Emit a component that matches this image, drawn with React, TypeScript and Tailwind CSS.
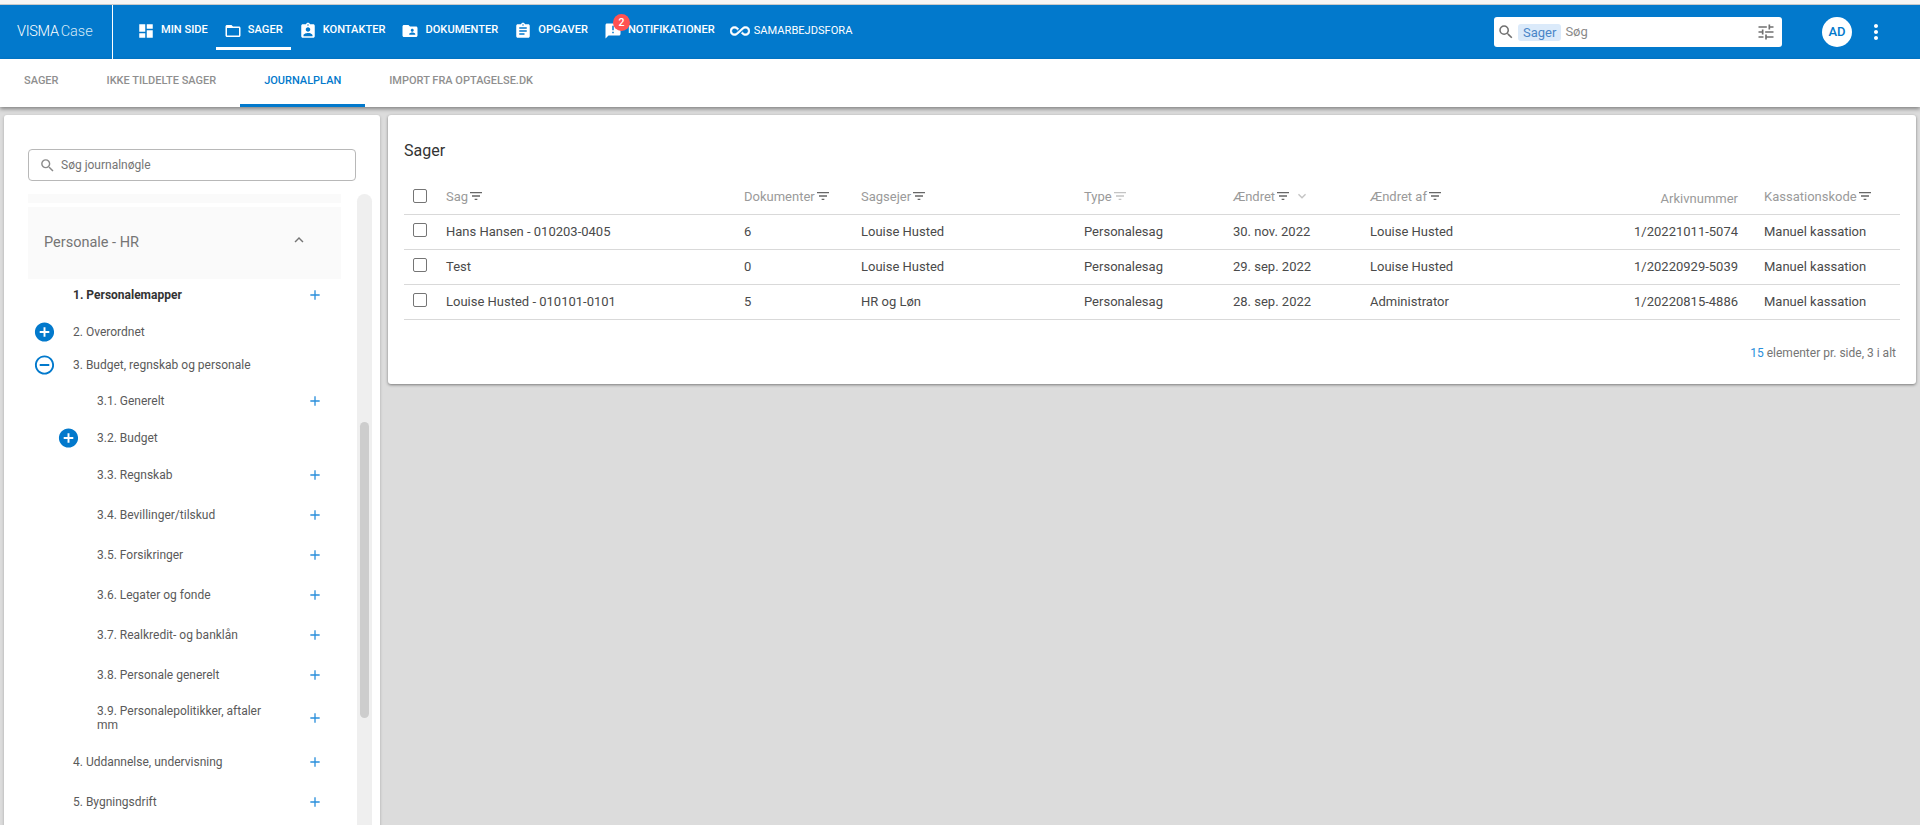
import {
  MdDashboard,
  MdFolderOpen,
  MdAssignmentInd,
  MdFolderShared,
  MdAssignment,
  MdAnnouncement,
  MdSearch,
  MdTune,
  MdMoreVert,
  MdFilterList,
  MdKeyboardArrowUp,
  MdKeyboardArrowDown,
  MdAdd,
  MdAddCircle,
  MdRemoveCircleOutline,
} from "react-icons/md"
import type { IconType } from "react-icons"

const navItems: { label: string; icon: IconType; active?: boolean; badge?: string }[] = [
  { label: "MIN SIDE", icon: MdDashboard },
  { label: "SAGER", icon: MdFolderOpen, active: true },
  { label: "KONTAKTER", icon: MdAssignmentInd },
  { label: "DOKUMENTER", icon: MdFolderShared },
  { label: "OPGAVER", icon: MdAssignment },
  { label: "NOTIFIKATIONER", icon: MdAnnouncement, badge: "2" },
]

const tabs = ["SAGER", "IKKE TILDELTE SAGER", "JOURNALPLAN", "IMPORT FRA OPTAGELSE.DK"]

type TreeRow = {
  label: string
  level: 0 | 1
  height: string
  marker: "plus" | "open" | "closed" | "add"
  bold?: boolean
}

const treeRows: TreeRow[] = [
  { label: "1. Personalemapper", level: 0, height: "h-[32px] mb-[4px]", marker: "add", bold: true },
  { label: "2. Overordnet", level: 0, height: "h-[33px]", marker: "plus" },
  { label: "3. Budget, regnskab og personale", level: 0, height: "h-[33px]", marker: "open" },
  { label: "3.1. Generelt", level: 1, height: "h-[40px]", marker: "add" },
  { label: "3.2. Budget", level: 1, height: "h-[34px]", marker: "plus" },
  { label: "3.3. Regnskab", level: 1, height: "h-[40px]", marker: "add" },
  { label: "3.4. Bevillinger/tilskud", level: 1, height: "h-[40px]", marker: "add" },
  { label: "3.5. Forsikringer", level: 1, height: "h-[40px]", marker: "add" },
  { label: "3.6. Legater og fonde", level: 1, height: "h-[40px]", marker: "add" },
  { label: "3.7. Realkredit- og banklån", level: 1, height: "h-[40px]", marker: "add" },
  { label: "3.8. Personale generelt", level: 1, height: "h-[40px]", marker: "add" },
  { label: "3.9. Personalepolitikker, aftaler mm", level: 1, height: "h-[46px] mb-[1px]", marker: "add" },
  { label: "4. Uddannelse, undervisning", level: 0, height: "h-[40px]", marker: "add" },
  { label: "5. Bygningsdrift", level: 0, height: "h-[40px]", marker: "add" },
]

const cases = [
  {
    name: "Hans Hansen - 010203-0405",
    docs: "6",
    owner: "Louise Husted",
    changed: "30. nov. 2022",
    changedBy: "Louise Husted",
    archive: "1/20221011-5074",
  },
  {
    name: "Test",
    docs: "0",
    owner: "Louise Husted",
    changed: "29. sep. 2022",
    changedBy: "Louise Husted",
    archive: "1/20220929-5039",
  },
  {
    name: "Louise Husted - 010101-0101",
    docs: "5",
    owner: "HR og Løn",
    changed: "28. sep. 2022",
    changedBy: "Administrator",
    archive: "1/20220815-4886",
  },
]

// all_inclusive, drawn by hand so it can take a stroke for the heavier look
function InfinityIcon() {
  return (
    <svg viewBox="0 0 24 24" width="20" height="20" fill="currentColor" stroke="currentColor" strokeWidth="0.7">
      <path d="M18.6 6.62c-1.44 0-2.8.56-3.77 1.53L12 10.66 10.48 12h.01L7.8 14.39c-.64.64-1.49.99-2.4.99-1.87 0-3.39-1.51-3.39-3.38S3.53 8.62 5.4 8.62c.91 0 1.76.35 2.44 1.03l1.13 1 1.51-1.34L9.22 8.2C8.2 7.18 6.84 6.62 5.4 6.62 2.42 6.62 0 9.04 0 12s2.42 5.38 5.4 5.38c1.44 0 2.8-.56 3.77-1.53l2.83-2.5.01.01L13.52 12h-.01l2.69-2.39c.64-.64 1.49-.99 2.4-.99 1.87 0 3.39 1.51 3.39 3.38s-1.52 3.38-3.39 3.38c-.9 0-1.76-.35-2.44-1.03l-1.14-1.01-1.51 1.34 1.27 1.12c1.02 1.01 2.37 1.57 3.82 1.57 2.98 0 5.4-2.41 5.4-5.38s-2.42-5.37-5.4-5.37z" />
    </svg>
  )
}

function Checkbox({ className = "" }: { className?: string }) {
  return <span className={`block h-[14px] w-[14px] rounded-[2px] border border-[#757575] bg-white ${className}`} />
}

function HeaderLabel({ label, faded }: { label: string; faded?: boolean }) {
  return (
    <span className="flex items-center">
      {label}
      <MdFilterList size={16} className={`-mt-[2px] ${faded ? "text-[#c4c4c4]" : "text-[#666666]"}`} />
    </span>
  )
}

function TreeItem({ row }: { row: TreeRow }) {
  return (
    <div className={`flex items-center ${row.height}`}>
      <div className={`relative flex min-w-0 flex-1 items-center ${row.level === 1 ? "pl-[69px]" : "pl-[45px]"}`}>
        {row.marker === "plus" && (
          <MdAddCircle
            size={23}
            className={`absolute top-1/2 -translate-y-1/2 text-[#0279cc] ${row.level === 1 ? "left-[29px]" : "left-[5px]"}`}
          />
        )}
        {row.marker === "open" && (
          <MdRemoveCircleOutline size={23} className="absolute top-1/2 left-[5px] -translate-y-1/2 text-[#0279cc]" />
        )}
        <span
          className={`text-[12px] leading-[14px] ${row.level === 1 ? "w-[175px]" : "w-[205px]"} ${
            row.bold ? "font-bold text-[#333333]" : "text-[#5a5a5a]"
          }`}
        >
          {row.label}
        </span>
      </div>
      {row.marker === "add" && <MdAdd size={16} className="mr-[18px] shrink-0 text-[#2a8fdb]" />}
    </div>
  )
}

export default function App() {
  return (
    <div className="flex h-[825px] w-[1920px] flex-col overflow-hidden bg-[#dcdcdc] font-['Roboto',sans-serif]">
      <div className="h-[5px] shrink-0 border-b border-[#c9c9c9] bg-[#f5f5f5]" />

      {/* top bar */}
      <header className="flex h-[54px] shrink-0 items-start bg-[#0279cc] text-white">
        <div className="flex h-full w-[113px] shrink-0 items-center border-r border-white pl-[17px] text-[14.5px] leading-none">
          <span className="font-light tracking-[-0.3px]">VISMA</span>
          <span className="ml-[2px] font-light text-[#d5e9f7]">Case</span>
        </div>
        <nav className="ml-[16px] flex text-[11.1px] font-medium">
          {navItems.map((item) => (
            <a
              key={item.label}
              className={`relative mt-[9px] flex h-[36px] items-center gap-[6px] border-b-[3px] px-[8px] ${
                item.active ? "border-white" : "border-transparent"
              }`}
            >
              <item.icon size={18} />
              {item.label}
              {item.badge && (
                <span className="absolute top-0 left-[17px] flex h-[17px] w-[17px] items-center justify-center rounded-full bg-[#ff5252] text-[10.5px] font-medium">
                  {item.badge}
                </span>
              )}
            </a>
          ))}
          <a className="mt-[9px] flex h-[36px] items-center gap-[4px] border-b-[3px] border-transparent pl-[7px]">
            <InfinityIcon />
            <span className="mt-[2px] font-normal">SAMARBEJDSFORA</span>
          </a>
        </nav>
        <div className="ml-auto mt-[12px] flex h-[30px] w-[288px] items-center rounded-[3px] bg-white pl-[3px] pr-[6px]">
          <MdSearch size={18} className="text-[#707070]" />
          <span className="ml-[3px] rounded-[3px] bg-[#dbeafa] px-[5px] py-[1px] text-[13px] leading-[15px] text-[#4a86c8]">
            Sager
          </span>
          <span className="ml-[4px] text-[13px] text-[#8a8a8a]">Søg</span>
          <MdTune size={20} className="ml-auto text-[#707070]" />
        </div>
        <div className="ml-[40px] mt-[12px] flex h-[30px] w-[30px] items-center justify-center rounded-full bg-white text-[13px] font-medium text-[#0279cc]">
          AD
        </div>
        <MdMoreVert size={24} className="ml-[12px] mr-[32px] mt-[15px]" />
      </header>

      {/* sub tabs */}
      <div className="z-10 flex h-[48px] shrink-0 bg-white shadow-[0_2px_4px_rgba(0,0,0,0.4)]">
        {tabs.map((tab) => (
          <a
            key={tab}
            className={`flex items-center border-b-[3px] px-[24px] text-[11px] font-medium ${
              tab === "JOURNALPLAN" ? "border-[#0279cc] text-[#0279cc]" : "border-transparent text-[#8f8f8f]"
            }`}
          >
            {tab}
          </a>
        ))}
      </div>

      <main className="flex min-h-0 flex-1 items-start gap-[8px] pt-[8px] pl-[4px] pr-[4px]">
        {/* left: journal plan */}
        <aside className="h-[720px] w-[376px] shrink-0 rounded-t-[3px] bg-white pt-[34px] shadow-[0_1px_3px_rgba(0,0,0,0.25)]">
          <div className="mx-[24px] flex h-[32px] w-[328px] items-center rounded-[4px] border border-[#b8b8b8] pl-[10px]">
            <MdSearch size={17} className="text-[#8a8a8a]" />
            <span className="ml-[5px] text-[12px] text-[#757575]">Søg journalnøgle</span>
          </div>
          <div className="mt-[13px] flex items-start pl-[24px]">
            <div className="w-[313px] shrink-0">
              <div className="h-[9px] bg-[#fafafa]" />
              <div className="mt-[4px] flex h-[72px] items-center justify-between bg-[#fafafa] pl-[16px] pr-[33px]">
                <span className="text-[14.5px] text-[#757575]">Personale - HR</span>
                <MdKeyboardArrowUp size={18} className="mb-[6px] text-[#757575]" />
              </div>
              {treeRows.map((row) => (
                <TreeItem key={row.label} row={row} />
              ))}
            </div>
            <div className="ml-[16px] h-[640px] w-[15px] shrink-0 rounded-t-[8px] bg-[#efefef] px-[3px] pt-[228px]">
              <div className="h-[296px] rounded-[5px] bg-[#cdcdcd]" />
            </div>
          </div>
        </aside>

        {/* right: cases */}
        <section className="h-[269px] w-[1528px] shrink-0 rounded-[3px] bg-white px-[16px] pt-[25px] shadow-[0_1px_3px_rgba(0,0,0,0.45)]">
          <h2 className="mb-[17px] text-[16px] leading-[22px] text-[#333333]">Sager</h2>
          <table className="w-[1496px] table-fixed border-collapse text-[13px] text-[#4a4a4a]">
            <colgroup>
              <col className="w-[42px]" />
              <col className="w-[298px]" />
              <col className="w-[117px]" />
              <col className="w-[223px]" />
              <col className="w-[149px]" />
              <col className="w-[137px]" />
              <col className="w-[230px]" />
              <col className="w-[164px]" />
              <col className="w-[136px]" />
            </colgroup>
            <thead>
              <tr className="h-[35px] border-b border-[#d9d9d9] text-left text-[#9a9a9a]">
                <th className="pl-[9px] font-normal">
                  <Checkbox />
                </th>
                <th className="pt-[1px] font-normal">
                  <HeaderLabel label="Sag" />
                </th>
                <th className="pt-[1px] font-normal">
                  <HeaderLabel label="Dokumenter" />
                </th>
                <th className="pt-[1px] font-normal">
                  <HeaderLabel label="Sagsejer" />
                </th>
                <th className="pt-[1px] font-normal">
                  <HeaderLabel label="Type" faded />
                </th>
                <th className="pt-[1px] font-normal">
                  <span className="flex items-center">
                    Ændret
                    <MdFilterList size={16} className="-mt-[2px] text-[#666666]" />
                    <MdKeyboardArrowDown size={16} className="ml-[3px] -mt-[2px] text-[#c4c4c4]" />
                  </span>
                </th>
                <th className="pt-[1px] font-normal">
                  <HeaderLabel label="Ændret af" />
                </th>
                <th className="pt-[5px] pr-[26px] text-right font-normal">Arkivnummer</th>
                <th className="pt-[1px] font-normal">
                  <HeaderLabel label="Kassationskode" />
                </th>
              </tr>
            </thead>
            <tbody>
              {cases.map((c) => (
                <tr key={c.name} className="h-[35px] border-b border-[#d9d9d9] [&>td]:pt-[1px]">
                  <td className="pl-[9px]">
                    <Checkbox className="mb-[4px]" />
                  </td>
                  <td>{c.name}</td>
                  <td>{c.docs}</td>
                  <td>{c.owner}</td>
                  <td>Personalesag</td>
                  <td>{c.changed}</td>
                  <td>{c.changedBy}</td>
                  <td className="pr-[26px] text-right">{c.archive}</td>
                  <td>Manuel kassation</td>
                </tr>
              ))}
            </tbody>
          </table>
          <p className="mt-[24px] pr-[4px] text-right text-[12px] leading-[18px] text-[#757575]">
            <span className="text-[#2a8fdb]">15</span> elementer pr. side, 3 i alt
          </p>
        </section>
      </main>
    </div>
  )
}
